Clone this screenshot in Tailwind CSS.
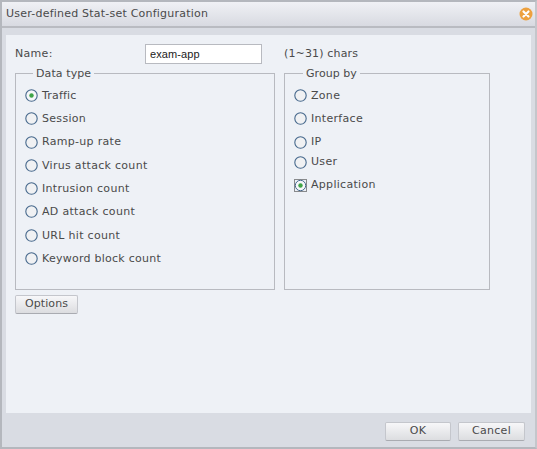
<!DOCTYPE html>
<html lang="en">
<head>
    <meta charset="UTF-8">
    <title>User-defined Stat-set Configuration</title>
    <script src="https://cdn.jsdelivr.net/npm/@tailwindcss/browser@4"></script>
</head>
<body class="bg-white">
    <div class="w-[537px] h-[449px] flex flex-col bg-[#d9dce3] border-2 border-[#b4b7bd] border-r-[#c4c6cb] font-['DejaVu_Sans',sans-serif] text-[11px] text-[#4a4a4a] overflow-hidden">

        <!-- Title bar -->
        <div class="h-[26px] shrink-0 flex items-center justify-between pl-[4px] pr-[2px] bg-gradient-to-b from-[#f0f1f5] to-[#d8dae1] border-b-2 border-[#b9bbc1]">
            <span class="pt-[1px] tracking-[0.22px] text-[#4a4a4a]">User-defined Stat-set Configuration</span>
            <svg width="14" height="14" viewBox="0 0 14 14">
                <circle cx="7" cy="7" r="6.5" fill="#eda13f"/>
                <path d="M4.5 4.5l5 5M9.5 4.5l-5 5" stroke="#fff" stroke-width="2.2" stroke-linecap="round"/>
            </svg>
        </div>

        <!-- Content panel -->
        <div class="h-[378px] mt-[7px] mx-[4px] shrink-0 bg-[#eef1f6] px-[9px] pt-[8px]">
            <div class="flex items-center h-[22px]">
                <label class="w-[130px] tracking-[0.3px]">Name:</label>
                <input type="text" value="exam-app" class="w-[117px] h-[20px] px-[4px] bg-white border border-[#b8bac0] font-['Liberation_Sans',sans-serif] text-[11px] tracking-[0.1px] text-[#222] outline-none">
                <span class="ml-[22px] tracking-[0.15px]">(1~31) chars</span>
            </div>

            <div class="flex gap-[9px] mt-[2px]">
                <!-- Data type -->
                <fieldset class="w-[260px] h-[223px] border border-[#b8bac0] pl-[9px]">
                    <legend class="ml-[8px] px-[3px] tracking-[0.1px] leading-[13px]">Data type</legend>
                    <div class="mt-[8px] flex flex-col gap-[7.3px]">
                        <div class="flex items-center gap-[4px] h-[16px]">
                            <svg class="-mt-[1px]" width="13" height="13" viewBox="0 0 13 13"><circle cx="6.5" cy="6.5" r="5.7" fill="#f6f7f9" stroke="#46688c" stroke-width="1.1"/><circle cx="6.5" cy="6.5" r="2.2" fill="#3fa447"/></svg>
                            <span class="tracking-[0.2px]">Traffic</span>
                        </div>
                        <div class="flex items-center gap-[4px] h-[16px]">
                            <svg class="-mt-[1px]" width="13" height="13" viewBox="0 0 13 13"><circle cx="6.5" cy="6.5" r="5.7" fill="#f0f1f3" stroke="#46688c" stroke-width="1.1"/></svg>
                            <span class="tracking-[0.3px]">Session</span>
                        </div>
                        <div class="flex items-center gap-[4px] h-[16px]">
                            <svg class="-mt-[1px]" width="13" height="13" viewBox="0 0 13 13"><circle cx="6.5" cy="6.5" r="5.7" fill="#f0f1f3" stroke="#46688c" stroke-width="1.1"/></svg>
                            <span class="tracking-[0.3px]">Ramp-up rate</span>
                        </div>
                        <div class="flex items-center gap-[4px] h-[16px]">
                            <svg class="-mt-[1px]" width="13" height="13" viewBox="0 0 13 13"><circle cx="6.5" cy="6.5" r="5.7" fill="#f0f1f3" stroke="#46688c" stroke-width="1.1"/></svg>
                            <span class="tracking-[0.3px]">Virus attack count</span>
                        </div>
                        <div class="flex items-center gap-[4px] h-[16px]">
                            <svg class="-mt-[1px]" width="13" height="13" viewBox="0 0 13 13"><circle cx="6.5" cy="6.5" r="5.7" fill="#f0f1f3" stroke="#46688c" stroke-width="1.1"/></svg>
                            <span class="tracking-[0.3px]">Intrusion count</span>
                        </div>
                        <div class="flex items-center gap-[4px] h-[16px]">
                            <svg class="-mt-[1px]" width="13" height="13" viewBox="0 0 13 13"><circle cx="6.5" cy="6.5" r="5.7" fill="#f0f1f3" stroke="#46688c" stroke-width="1.1"/></svg>
                            <span class="tracking-[0.3px]">AD attack count</span>
                        </div>
                        <div class="flex items-center gap-[4px] h-[16px]">
                            <svg class="-mt-[1px]" width="13" height="13" viewBox="0 0 13 13"><circle cx="6.5" cy="6.5" r="5.7" fill="#f0f1f3" stroke="#46688c" stroke-width="1.1"/></svg>
                            <span class="tracking-[0.3px]">URL hit count</span>
                        </div>
                        <div class="flex items-center gap-[4px] h-[16px]">
                            <svg class="-mt-[1px]" width="13" height="13" viewBox="0 0 13 13"><circle cx="6.5" cy="6.5" r="5.7" fill="#f0f1f3" stroke="#46688c" stroke-width="1.1"/></svg>
                            <span class="tracking-[0.25px]">Keyword block count</span>
                        </div>
                    </div>
                </fieldset>

                <!-- Group by -->
                <fieldset class="w-[206px] h-[223px] border border-[#b8bac0] pl-[9px]">
                    <legend class="ml-[9px] px-[3px] tracking-[0.05px] leading-[13px]">Group by</legend>
                    <div class="mt-[8px] flex flex-col">
                        <div class="flex items-center gap-[4px] h-[16px]">
                            <svg class="-mt-[1px]" width="13" height="13" viewBox="0 0 13 13"><circle cx="6.5" cy="6.5" r="5.7" fill="#f0f1f3" stroke="#46688c" stroke-width="1.1"/></svg>
                            <span class="tracking-[0.3px]">Zone</span>
                        </div>
                        <div class="flex items-center gap-[4px] h-[16px] mt-[7.3px]">
                            <svg class="-mt-[1px]" width="13" height="13" viewBox="0 0 13 13"><circle cx="6.5" cy="6.5" r="5.7" fill="#f0f1f3" stroke="#46688c" stroke-width="1.1"/></svg>
                            <span class="tracking-[0.3px]">Interface</span>
                        </div>
                        <div class="flex items-center gap-[4px] h-[16px] mt-[7.3px]">
                            <svg class="-mt-[1px]" width="13" height="13" viewBox="0 0 13 13"><circle cx="6.5" cy="6.5" r="5.7" fill="#f0f1f3" stroke="#46688c" stroke-width="1.1"/></svg>
                            <span class="tracking-[0.3px]">IP</span>
                        </div>
                        <div class="flex items-center gap-[4px] h-[16px] mt-[4px]">
                            <svg class="-mt-[1px]" width="13" height="13" viewBox="0 0 13 13"><circle cx="6.5" cy="6.5" r="5.7" fill="#f0f1f3" stroke="#46688c" stroke-width="1.1"/></svg>
                            <span class="tracking-[0.3px]">User</span>
                        </div>
                        <div class="flex items-center gap-[4px] h-[16px] mt-[7px]">
                            <svg class="-mt-[1px]" width="13" height="13" viewBox="0 0 13 13"><rect x="0.5" y="0.5" width="12" height="12" fill="none" stroke="#222" stroke-dasharray="1 1"/><circle cx="6.5" cy="6.5" r="5.2" fill="#f6f7f9" stroke="#46688c"/><circle cx="6.5" cy="6.5" r="2.2" fill="#3fa447"/></svg>
                            <span class="tracking-[0.3px]">Application</span>
                        </div>
                    </div>
                </fieldset>
            </div>

            <button class="mt-[5px] w-[63px] h-[19px] rounded-[2px] border border-[#c4c6cc] border-b-[#a9abb1] bg-gradient-to-b from-[#f7f7f9] to-[#dcdde0] tracking-[0.1px]">Options</button>
        </div>

        <!-- Footer buttons -->
        <div class="flex justify-end gap-[7px] pr-[10px] pt-[9px]">
            <button class="w-[66px] h-[19px] rounded-[2px] border border-[#c4c6cc] border-b-[#a9abb1] bg-gradient-to-b from-[#f7f7f9] to-[#dcdde0] tracking-[0.3px]">OK</button>
            <button class="w-[67px] h-[19px] rounded-[2px] border border-[#c4c6cc] border-b-[#a9abb1] bg-gradient-to-b from-[#f7f7f9] to-[#dcdde0] tracking-[0.3px]">Cancel</button>
        </div>
    </div>
</body>
</html>
